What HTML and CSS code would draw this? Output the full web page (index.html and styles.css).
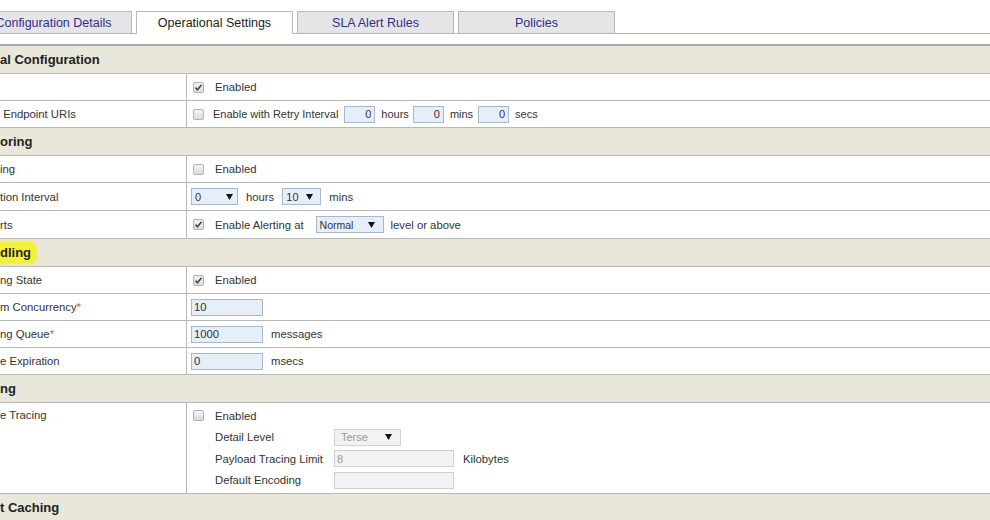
FILE: index.html
```html
<!DOCTYPE html>
<html lang="en">
<head>
<meta charset="utf-8">
<title>Operational Settings</title>
<link rel="stylesheet" href="styles.css">
</head>
<body>
<div class="tabs">
  <div class="tab tab-first">Configuration Details</div>
  <div class="tab tab-active">Operational Settings</div>
  <div class="tab">SLA Alert Rules</div>
  <div class="tab">Policies</div>
</div>

<div class="form">
  <div class="sec">al Configuration</div>
  <div class="row">
    <div class="lbl"></div>
    <div class="val"><span class="cb cb-on"><svg width="9" height="9" viewBox="0 0 9 9"><path d="M1.5 4.6 L3.5 6.8 L7.6 1.8" fill="none" stroke="#4a4a4a" stroke-width="1.6"/></svg></span>Enabled</div>
  </div>
  <div class="row">
    <div class="lbl">&nbsp;Endpoint URIs</div>
    <div class="val val-sm"><span class="cb cb-tight"></span>Enable with Retry Interval<input class="inp inp-num" value="0" readonly>hours<input class="inp inp-num" value="0" readonly>mins<input class="inp inp-num" value="0" readonly>secs</div>
  </div>

  <div class="sec">oring</div>
  <div class="row">
    <div class="lbl">ing</div>
    <div class="val"><span class="cb"></span>Enabled</div>
  </div>
  <div class="row row-28">
    <div class="lbl">tion Interval</div>
    <div class="val val-mon">
      <span class="sel sel-hours">0<svg class="arr" width="7" height="6" viewBox="0 0 7 6"><polygon points="0,0 7,0 3.5,6" fill="#111"/></svg></span>
      <span class="txt">hours</span>
      <span class="sel sel-mins">10<svg class="arr" width="7" height="6" viewBox="0 0 7 6"><polygon points="0,0 7,0 3.5,6" fill="#111"/></svg></span>
      <span class="txt">mins</span>
    </div>
  </div>
  <div class="row row-28">
    <div class="lbl">rts</div>
    <div class="val"><span class="cb cb-on"><svg width="9" height="9" viewBox="0 0 9 9"><path d="M1.5 4.6 L3.5 6.8 L7.6 1.8" fill="none" stroke="#4a4a4a" stroke-width="1.6"/></svg></span>Enable Alerting at<span class="sel sel-level">Normal<svg class="arr" width="7" height="6" viewBox="0 0 7 6"><polygon points="0,0 7,0 3.5,6" fill="#111"/></svg></span>level or above</div>
  </div>

  <div class="sec sec-28"><span class="hl">dling</span></div>
  <div class="row">
    <div class="lbl">ng State</div>
    <div class="val"><span class="cb cb-on"><svg width="9" height="9" viewBox="0 0 9 9"><path d="M1.5 4.6 L3.5 6.8 L7.6 1.8" fill="none" stroke="#4a4a4a" stroke-width="1.6"/></svg></span>Enabled</div>
  </div>
  <div class="row">
    <div class="lbl">m Concurrency<span class="req">*</span></div>
    <div class="val"><input class="inp inp-wide" value="10" readonly></div>
  </div>
  <div class="row">
    <div class="lbl">ng Queue<span class="req">*</span></div>
    <div class="val"><input class="inp inp-wide" value="1000" readonly><span class="unit">messages</span></div>
  </div>
  <div class="row">
    <div class="lbl">e Expiration</div>
    <div class="val"><input class="inp inp-wide" value="0" readonly><span class="unit">msecs</span></div>
  </div>

  <div class="sec">ng</div>
  <div class="row row-tall">
    <div class="lbl lbl-top">e Tracing</div>
    <div class="val val-trace">
      <span class="cb"></span><span class="span3">Enabled</span>
      <span></span><span>Detail Level</span><span class="sel sel-dis">Terse<svg class="arr" width="7" height="6" viewBox="0 0 7 6"><polygon points="0,0 7,0 3.5,6" fill="#111"/></svg></span><span></span>
      <span></span><span>Payload Tracing Limit</span><input class="inp inp-dis" value="8" readonly><span class="unit">Kilobytes</span>
      <span></span><span>Default Encoding</span><input class="inp inp-dis" value="" readonly><span></span>
    </div>
  </div>

  <div class="sec">t Caching</div>
</div>
</body>
</html>
```

FILE: styles.css
```css
* {
  box-sizing: border-box;
}

html,
body {
  margin: 0;
}

body {
  width: 990px;
  height: 520px;
  overflow: hidden;
  background: #ffffff;
  font-family: "Liberation Sans", Arial, sans-serif;
  font-size: 11.3px;
  color: #333333;
}

/* ---------- tabs ---------- */
.tabs {
  display: flex;
  align-items: flex-start;
  gap: 4px;
  padding-top: 11px;
  border-bottom: 1px solid #b4b4b4;
}

.tab {
  flex: none;
  width: 157px;
  height: 22px;
  border: 1px solid #b9b9b9;
  border-bottom: 0;
  background: #e5e5e8;
  color: #2f2f8c;
  font-size: 12.5px;
  display: flex;
  align-items: center;
  justify-content: center;
  white-space: nowrap;
}

.tab-first {
  margin-left: -25px;
}

.tab-active {
  background: #ffffff;
  color: #222222;
  height: 23px;
  margin-bottom: -1px;
  padding-bottom: 1px;
}

/* ---------- form table ---------- */
.form {
  margin-top: 10px;
  border-top: 2px solid #a8abb0;
}

.sec {
  height: 28px;
  border-bottom: 1px solid #b8b8b8;
  background: #e9e7d9;
  font-weight: bold;
  font-size: 13px;
  color: #222222;
  display: flex;
  align-items: center;
  white-space: nowrap;
}

.hl {
  background: #f4f03a;
  padding: 3px 5px 3px 0;
  border-radius: 0 7px 6px 0;
  box-shadow: 0 0 2px 1px #f4f03a;
}

.row {
  display: grid;
  grid-template-columns: 187px 1fr;
  height: 27px;
  border-bottom: 1px solid #b8b8b8;
}

.row-28 {
  height: 28px;
}

.row-tall {
  height: 91px;
}

.lbl {
  border-right: 1px solid #b8b8b8;
  display: flex;
  align-items: center;
  white-space: nowrap;
  overflow: hidden;
}

.lbl-top {
  align-items: flex-start;
  padding-top: 2px;
  line-height: 21.5px;
}

.req {
  color: #cc5555;
}

.val {
  display: flex;
  align-items: center;
  padding-left: 4px;
  white-space: nowrap;
}

.val-sm {
  font-size: 11px;
}

/* ---------- checkbox ---------- */
.cb {
  flex: none;
  width: 11px;
  height: 11px;
  margin: 0 11px 0 2px;
  border: 1px solid #b2b2b2;
  border-radius: 2px;
  background: linear-gradient(#f6f6f6, #d9d9d9);
  display: inline-flex;
  align-items: center;
  justify-content: center;
}

.cb-on {
  background: linear-gradient(#f2f2f2, #dedede);
}

.cb-tight {
  margin-right: 9px;
}

/* ---------- inputs ---------- */
.inp {
  flex: none;
  height: 17px;
  margin: 0;
  padding: 0 2px;
  border: 1px solid #a9b7cb;
  background: #e6eefa;
  font-family: inherit;
  font-size: 11.3px;
  color: #333333;
  outline: none;
}

.inp-num {
  width: 31px;
  text-align: right;
  padding-right: 3px;
  font-size: 11px;
  margin: 0 6px;
}

.val-sm .inp-num:nth-of-type(2) {
  margin-left: 4px;
}

.val-sm .inp-num:nth-of-type(3) {
  margin-left: 5px;
}

.inp-wide {
  width: 72px;
}

.inp-dis {
  width: 120px;
  background: #f3f3f3;
  border-color: #cfcfcf;
  color: #9a9a9a;
}

.unit {
  margin-left: 8px;
}

/* ---------- selects ---------- */
.sel {
  flex: none;
  height: 17px;
  display: inline-flex;
  align-items: center;
  justify-content: space-between;
  border: 1px solid #a9b7cb;
  background: #e6eefa;
  padding: 0 6px 0 3px;
  font-size: 11px;
  color: #333333;
}

.arr {
  flex: none;
}

.sel-hours {
  width: 47px;
  padding-right: 4px;
}

.sel-mins {
  width: 39px;
  padding-right: 7px;
}

.sel-level {
  width: 68px;
  margin: 0 7px 0 12px;
  font-size: 10.5px;
  padding-right: 8px;
}

.sel-dis {
  width: 67px;
  background: #f2f2f2;
  border-color: #d2d2d2;
  color: #9a9a9a;
  padding-left: 6px;
  padding-right: 8px;
}

.val-mon .txt {
  margin: 0 8px;
}

.val-mon .txt:first-of-type {
  margin-right: 9px;
}

/* ---------- tracing group ---------- */
.val-trace {
  display: grid;
  grid-template-columns: 24px 119px 120px auto;
  grid-auto-rows: 21.5px;
  align-items: center;
  align-content: start;
  padding-top: 2px;
}

.val-trace .cb {
  margin: 0 0 0 2px;
}

.val-trace .unit {
  margin-left: 9px;
}

.span3 {
  grid-column: span 3;
}
```
